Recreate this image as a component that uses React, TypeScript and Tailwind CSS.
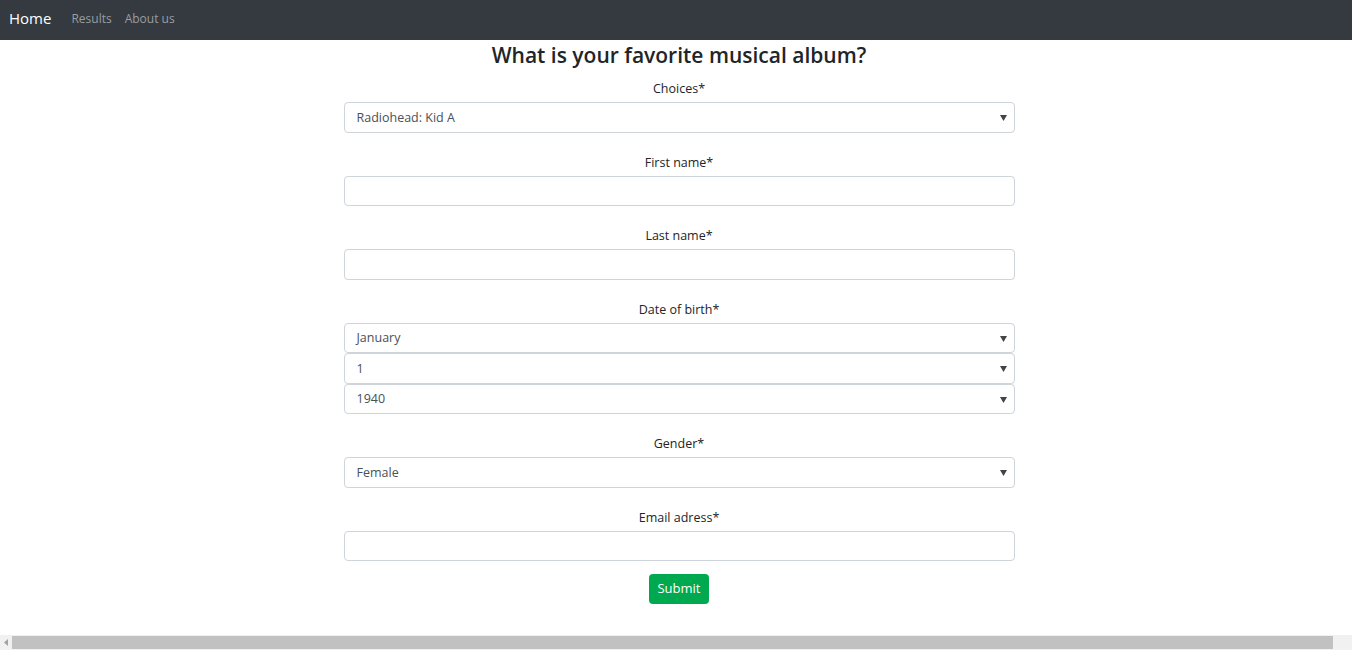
import React from "react"

const font = { fontFamily: '"Open Sans", "Noto Sans", sans-serif' }

function Label({ text }: { text: string }) {
  return (
    <div className="h-[20px] leading-[20px] text-[12.5px] text-[#212529] text-center mb-[4px] pt-[1px]">
      {text}*
    </div>
  )
}

function Select({ value }: { value: string }) {
  return (
    <div className="relative h-[30.5px] w-full border border-[#ced4da] rounded-[4px] bg-white flex items-center px-[12px] pt-[2px]">
      <span className="text-[12.5px] text-[#495057]">{value}</span>
      {/* arrow */}
      <svg
        className="absolute right-[7px] top-[12px]"
        width="7"
        height="6"
        viewBox="0 0 7 6"
      >
        <path d="M0 0 H7 L3.5 6 Z" fill="#444" />
      </svg>
    </div>
  )
}

function TextInput() {
  return <div className="h-[30.5px] w-full border border-[#ced4da] rounded-[4px] bg-white" />
}

export default function App() {
  return (
    <div className="w-[1352px] h-[650px] overflow-hidden flex flex-col bg-white" style={font}>
      <div className="h-[635px] w-[1358px] flex flex-col">
        {/* Navbar */}
        <nav className="h-[40px] bg-[#343a40] flex items-center pl-[9px] pb-[3px]">
          <span className="text-white text-[15px] mr-[20px]">Home</span>
          <ul className="flex items-center gap-[13px] text-[12px] text-[#9a9da0]">
            <li>Results</li>
            <li>About us</li>
          </ul>
        </nav>

        <div className="flex flex-col items-center">
          <h1 className="text-[21px] font-semibold text-[#212529] h-[30px] leading-[30px] mb-[8px]">
            What is your favorite musical album?
          </h1>

          <form className="w-[671px] flex flex-col">
            <div className="mb-[19px]">
              <Label text="Choices" />
              <Select value="Radiohead: Kid A" />
            </div>
            <div className="mb-[19px]">
              <Label text="First name" />
              <TextInput />
            </div>
            <div className="mb-[19px]">
              <Label text="Last name" />
              <TextInput />
            </div>
            <div className="mb-[19px]">
              <Label text="Date of birth" />
              <Select value="January" />
              <Select value="1" />
              <Select value="1940" />
            </div>
            <div className="mb-[19px]">
              <Label text="Gender" />
              <Select value="Female" />
            </div>
            <div className="mb-[13px]">
              <Label text="Email adress" />
              <TextInput />
            </div>
            <div className="flex justify-center">
              <button
                type="button"
                className="h-[30px] w-[60px] rounded-[4px] bg-[#00a94f] text-white text-[13px]"
              >
                Submit
              </button>
            </div>
          </form>
        </div>
      </div>

      {/* horizontal scrollbar */}
      <div className="h-[15px] bg-[#f1f1f1] flex items-center">
        <div className="w-[12px] flex justify-center">
          <svg width="4" height="7" viewBox="0 0 4 7">
            <path d="M4 0 V7 L0 3.5 Z" fill="#a3a3a3" />
          </svg>
        </div>
        <div className="h-[13px] w-[1321px] bg-[#c1c1c1]" />
      </div>
    </div>
  )
}
